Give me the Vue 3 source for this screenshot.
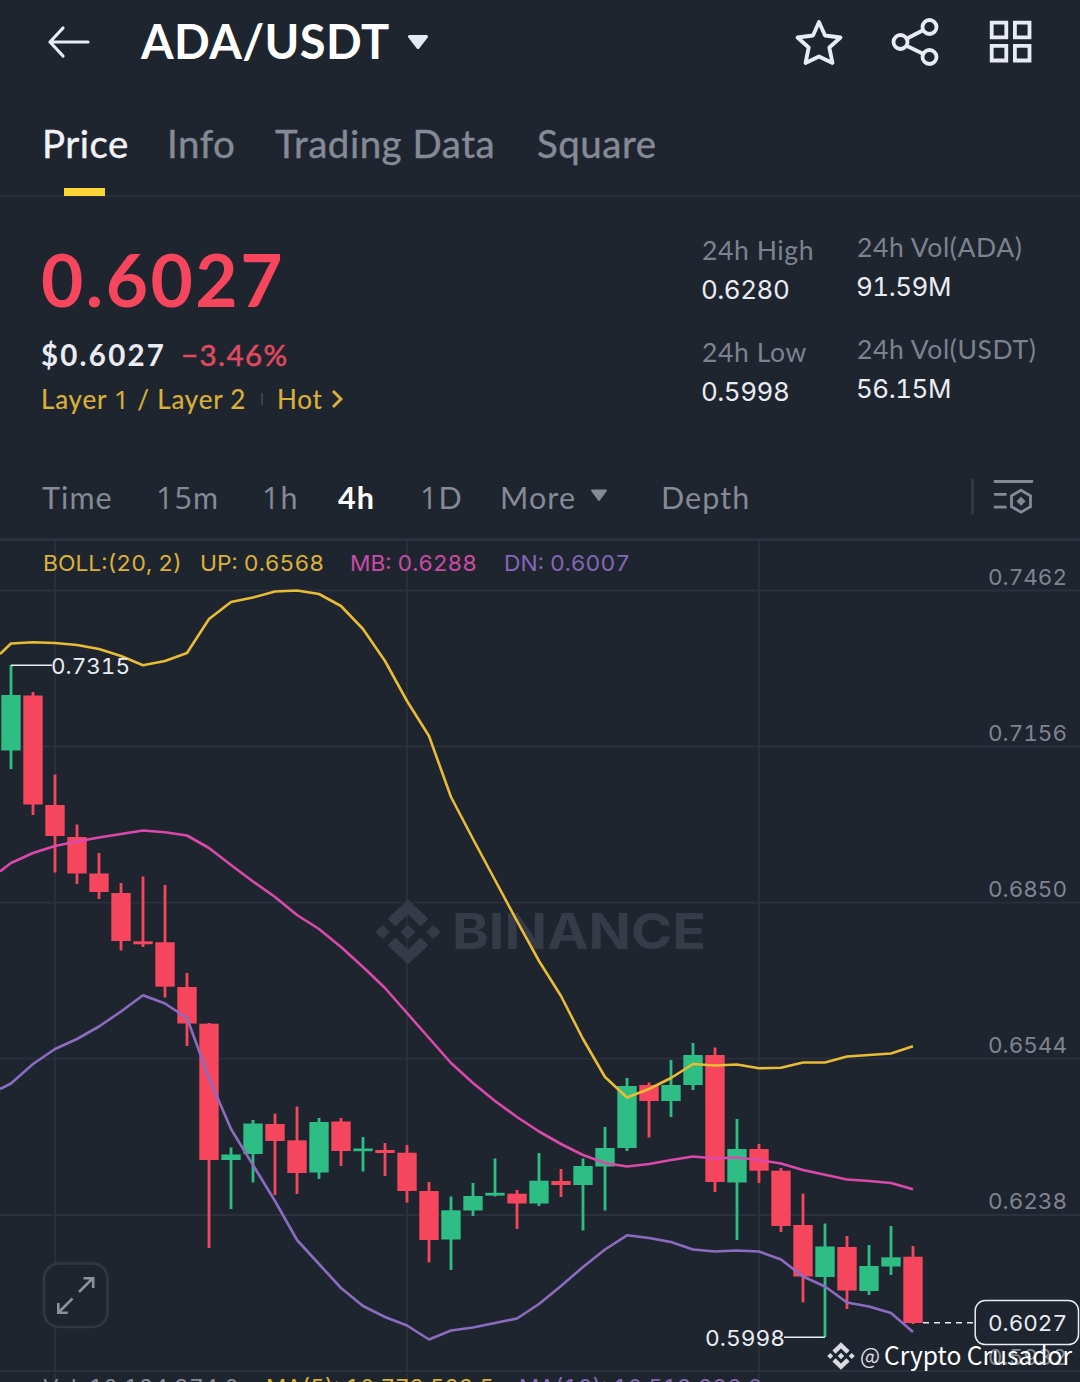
<template>
  <main class="screen">
    <header class="topbar">
      <svg class="back" viewBox="0 0 44 34" aria-label="Back">
        <path d="M16 3 3 17l13 14M3 17h38" />
      </svg>
      <h1>ADA/USDT</h1>
      <svg class="caret" viewBox="0 0 22 16">
        <path d="M2.500 2.500h17L11 13.500z" />
      </svg>
      <div class="actions">
        <svg class="icon" viewBox="0 0 52 52" aria-label="Favourite">
          <path d="M26 6 32 19.500 47.500 21.500 36.300 31.500 39.500 47 26 40.500 12.500 47 15.700 31.500 4.500 21.500 20 19.500z" />
        </svg>
        <svg class="icon" viewBox="0 0 52 52" aria-label="Share">
          <circle cx="11.500" cy="26" r="7" />
          <circle cx="40.500" cy="11" r="7" />
          <circle cx="40.500" cy="41" r="7" />
          <path d="M18 22.500 34 14.200M17 29.500 34.500 38" />
        </svg>
        <svg class="icon square" viewBox="0 0 52 52" aria-label="Layout">
          <path d="M6.700 6.700h14.600v14.600H6.700zM29.900 6.700h14.600v14.600H29.900zM6.700 29.900h14.600v14.600H6.700zM29.900 29.900h14.600v14.600H29.900z" />
        </svg>
      </div>
    </header>

    <nav class="tabs">
      <a v-for="tab in tabs" :key="tab" :class="{ active: tab === activeTab }" @click="activeTab = tab">
        <span>{{ tab }}</span>
      </a>
    </nav>

    <section class="summary">
      <div class="quote">
        <p class="last">0.6027</p>
        <p class="fiat"><b>$0.6027</b><span>−3.46%</span></p>
        <p class="tags">
          <span class="layers">Layer <i>1</i> / Layer 2</span>
          <span class="sep"></span>
          <span class="hot">Hot</span>
          <svg class="chevron" viewBox="0 0 12 20"><path d="m2 2 8 8-8 8" /></svg>
        </p>
      </div>
      <dl v-for="(column, c) in stats" :key="c" class="stats">
        <div v-for="stat in column" :key="stat.label">
          <dt>{{ stat.label }}</dt>
          <dd>{{ stat.value }}</dd>
        </div>
      </dl>
    </section>

    <nav class="intervals">
      <a>Time</a>
      <a><i>15</i>m</a>
      <a><i>1</i>h</a>
      <a class="active">4h</a>
      <a><i>1</i>D</a>
      <a>More <svg class="more" viewBox="0 0 18 13"><path d="M2 1.500h14L9 11z" /></svg></a>
      <a>Depth</a>
      <svg class="settings" viewBox="0 0 64 40" aria-label="Chart settings">
        <path class="rule" d="M2.500 4v33" />
        <path d="M25 5.500h37M25 18.300h10.500M25 31.200h10.500M51 14.200l9.500 5.500v11L51 36.200l-9.500-5.500v-11z" />
        <path class="dot" d="m51 20.700 4.500 4.500-4.500 4.500-4.500-4.500z" />
      </svg>
    </nav>

    <svg class="chart" viewBox="0 539 1080 843">
      <g class="grid">
        <path class="edge" d="M0 539.500H1080" />
        <path v-for="y in gridY" :key="y" :d="`M0 ${y}H1080`" />
        <path v-for="x in gridX" :key="x" :d="`M${x} 541V1382`" />
      </g>

      <g class="brand">
        <path transform="translate(408 932) scale(1.016)" :d="logo" />
        <text x="452" y="949" textLength="254" lengthAdjust="spacingAndGlyphs">BINANCE</text>
      </g>

      <g v-for="(c, i) in candles" :key="i" :class="c[4] ? 'up' : 'down'">
        <rect :x="9.6 + i * step" :y="c[2]" width="2.800" :height="c[3] - c[2]" />
        <rect :x="1.3 + i * step" :y="c[0]" width="19.400" :height="c[1] - c[0]" />
      </g>

      <polyline v-for="band in bands" :key="band.name" class="band" :class="band.name" :points="points(band)" />

      <g class="legend">
        <text
          v-for="item in legend"
          :key="item.text"
          :class="item.name"
          :x="item.x"
          y="571"
          :textLength="item.width"
          lengthAdjust="spacingAndGlyphs"
        >{{ item.text }}</text>
      </g>

      <g class="axis">
        <text
          v-for="(label, i) in axis"
          :key="label"
          x="988"
          :y="585 + i * 156"
          textLength="79"
          lengthAdjust="spacingAndGlyphs"
        >{{ label }}</text>
      </g>

      <g class="marks">
        <path d="M11 665.300H52M784 1337.300h41" />
        <text x="51" y="674" textLength="79" lengthAdjust="spacingAndGlyphs">0.7315</text>
        <text x="705" y="1346" textLength="80" lengthAdjust="spacingAndGlyphs">0.5998</text>
        <path class="dash" d="M923 1322.700h51" />
        <rect x="975.200" y="1300.600" width="103.300" height="44" rx="10" />
        <text x="988" y="1331" textLength="79" lengthAdjust="spacingAndGlyphs">0.6027</text>
      </g>

      <g class="expand">
        <rect x="44" y="1263.500" width="63.500" height="63.500" rx="15" />
        <path d="M79 1292l14-14M83.500 1278.300h9.700v9.700M72.500 1298.500l-14 14M58.300 1303v9.800h9.500" />
      </g>

      <g class="volume">
        <text x="43" y="1395" textLength="196" lengthAdjust="spacingAndGlyphs">Vol: 10,124,374.0</text>
        <text class="upper" x="266" y="1395" textLength="228" lengthAdjust="spacingAndGlyphs">MA(5): 10,772,523.5</text>
        <text class="lower" x="519" y="1395" textLength="243" lengthAdjust="spacingAndGlyphs">MA(10): 10,513,296.6</text>
      </g>

      <g class="author">
        <path transform="translate(841 1356) scale(.43)" :d="logo" />
        <text class="at" x="860" y="1364" textLength="20" lengthAdjust="spacingAndGlyphs">@</text>
        <text x="884" y="1365" textLength="188" lengthAdjust="spacingAndGlyphs">Crypto Crusador</text>
      </g>
    </svg>
  </main>
</template>

<script setup>
import { ref } from "vue";

const tabs = ["Price", "Info", "Trading Data", "Square"];
const activeTab = ref("Price");

const stats = [
  [
    { label: "24h High", value: "0.6280" },
    { label: "24h Low", value: "0.5998" },
  ],
  [
    { label: "24h Vol(ADA)", value: "91.59M" },
    { label: "24h Vol(USDT)", value: "56.15M" },
  ],
];

const legend = [
  { name: "upper", text: "BOLL:(20, 2)", x: 43, width: 139 },
  { name: "upper", text: "UP: 0.6568", x: 200, width: 124 },
  { name: "middle", text: "MB: 0.6288", x: 350, width: 127 },
  { name: "lower", text: "DN: 0.6007", x: 504, width: 126 },
];

const step = 22;
const gridY = [590.5, 746.5, 902.7, 1058.7, 1215, 1371];
const gridX = [55, 407, 759];
const axis = ["0.7462", "0.7156", "0.6850", "0.6544", "0.6238", "0.5932"];

// body top, body bottom, high, low, rising
const candles = [
  [695, 750.5, 665, 769, 1],
  [695.5, 804.5, 692, 815, 0],
  [805, 836, 774.5, 872.5, 0],
  [837, 873.5, 824.5, 884, 0],
  [873.5, 892, 853, 899, 0],
  [893, 941, 883, 950.5, 0],
  [941.3, 944.3, 876.5, 947, 0],
  [942.3, 986.7, 885, 997.5, 0],
  [987, 1023.5, 973, 1046, 0],
  [1023.7, 1160, 1023, 1248, 0],
  [1154.5, 1160, 1147.5, 1209, 1],
  [1123.5, 1154, 1120, 1182.5, 1],
  [1124, 1141, 1113.5, 1195, 0],
  [1140.3, 1173, 1106.5, 1194, 0],
  [1122, 1172.5, 1118, 1179, 1],
  [1121.5, 1151, 1118, 1166, 0],
  [1148.5, 1151.2, 1137, 1171.5, 1],
  [1150, 1153, 1143, 1176, 0],
  [1152.7, 1191, 1145, 1202.5, 0],
  [1191, 1240, 1182, 1262.5, 0],
  [1210.3, 1239.5, 1196.5, 1270, 1],
  [1196, 1210.5, 1183, 1216, 1],
  [1192.8, 1195.6, 1158.5, 1196.5, 1],
  [1193.7, 1203.5, 1190, 1229, 0],
  [1180.7, 1203.5, 1153, 1206, 1],
  [1181, 1185, 1169, 1197, 0],
  [1166, 1185, 1158.5, 1230.5, 1],
  [1148, 1166.5, 1127, 1210.5, 1],
  [1086, 1148, 1078, 1151, 1],
  [1085, 1101, 1082.5, 1137.5, 0],
  [1085, 1101, 1060, 1117, 1],
  [1055, 1085, 1043, 1090, 1],
  [1055, 1182, 1047.5, 1192, 0],
  [1149, 1182.5, 1119, 1240, 1],
  [1149, 1170.7, 1144, 1183, 0],
  [1170.7, 1226, 1168, 1232, 0],
  [1225, 1276.5, 1193.5, 1302.5, 0],
  [1246.5, 1277, 1223.5, 1337, 1],
  [1247, 1290.5, 1236, 1309, 0],
  [1266, 1291, 1245, 1295, 1],
  [1257.3, 1266.5, 1226, 1275, 1],
  [1256.7, 1323, 1246, 1324, 0],
];

// first value sits on the left edge, the rest on the candle centres
const bands = [
  {
    name: "upper",
    values: [
      654, 643.5, 642.3, 643, 645, 649, 656, 665.3, 661, 653, 619, 602, 597.5, 591.5, 590.5, 594, 606,
      629, 661, 701, 736, 797, 839, 880, 921, 961, 996, 1039, 1077, 1097.5, 1089, 1078, 1064, 1065.5,
      1064.5, 1068.3, 1067.7, 1062.5, 1062.5, 1056.5, 1055, 1053.5, 1046.3,
    ],
  },
  {
    name: "middle",
    values: [
      871.5, 863, 853, 846, 841.5, 837.5, 834, 830.5, 832.2, 835.5, 848, 865, 881.5, 897, 915, 929,
      947, 967, 988, 1013, 1038, 1063, 1083, 1101, 1117, 1131.5, 1144, 1155, 1163, 1166.5, 1164, 1160,
      1156.5, 1158.5, 1157.5, 1160, 1163.5, 1170, 1174.7, 1179.5, 1181, 1183, 1189.3,
    ],
  },
  {
    name: "lower",
    values: [
      1089, 1083.5, 1064, 1049, 1039, 1026.5, 1011.5, 995.3, 1003.5, 1018, 1078, 1129, 1165, 1201,
      1240, 1264, 1288, 1306, 1317, 1325.5, 1339.5, 1330.5, 1327.5, 1323, 1318.5, 1304, 1286, 1267,
      1249.5, 1235.3, 1238, 1242, 1249.5, 1251.5, 1250.5, 1251.5, 1259.5, 1276.5, 1286.5, 1302.5, 1306.5,
      1313, 1332,
    ],
  },
];

const logo =
  "M0-32 20-13 12.500-5.500 0-17.500-12.500-5.500-20-13zM0 32 20 13 12.500 5.500 0 17.500-12.500 5.500-20 13zM0-7.500 7.500 0 0 7.500-7.500 0zM-25-7-18 0-25 7-32 0zM25-7 32 0 25 7 18 0z";

function points(band) {
  return band.values.map((y, i) => `${i ? 11 + (i - 1) * step : 0},${y}`).join(" ");
}
</script>

<style>
body {
  margin: 0;
  background: #1f252f;
}
</style>

<style scoped>
.screen {
  width: 1080px;
  height: 1382px;
  overflow: hidden;
  background: #1f252f;
  color: #eaecf3;
  font-family: Lato, "Open Sans", sans-serif;
}

h1,
p,
dl,
dd {
  margin: 0;
}

svg {
  display: block;
  flex: none;
}

i {
  font-family: "Open Sans", sans-serif;
  font-style: normal;
}

.topbar {
  display: flex;
  align-items: center;
  box-sizing: border-box;
  height: 84px;
  padding: 0 44px 0 47px;
}

.back {
  width: 44px;
  height: 34px;
  fill: none;
  stroke: #eaecf3;
  stroke-width: 3.200;
  stroke-linecap: round;
  stroke-linejoin: round;
}

h1 {
  width: 248px;
  margin: -3px 0 0 50px;
  color: #fff;
  font-size: 47px;
  line-height: 80px;
  letter-spacing: 0.4px;
  white-space: nowrap;
}

.caret {
  width: 22px;
  height: 16px;
  margin-left: 18px;
}

.caret path {
  fill: #e6e9f2;
  stroke: #e6e9f2;
  stroke-width: 3;
  stroke-linejoin: round;
}

.actions {
  display: flex;
  gap: 44px;
  margin-left: auto;
}

.icon {
  width: 52px;
  height: 52px;
  fill: none;
  stroke: #e8ebf4;
  stroke-width: 3.800;
  stroke-linejoin: round;
}

.icon.square {
  margin-right: -1px;
  stroke-linejoin: miter;
}

.tabs {
  display: grid;
  grid-template-columns: 125px 108px 262px 1fr;
  box-sizing: border-box;
  height: 113px;
  padding-left: 42px;
  border-bottom: 2px solid #292f39;
  color: #858a96;
  font-size: 38.500px;
  line-height: 60px;
  letter-spacing: 0.5px;
  -webkit-text-stroke: 0.4px;
}

.tabs span {
  display: block;
  width: max-content;
  height: 83px;
  padding-top: 29px;
}

.tabs .active {
  color: #f0f2f8;
}

.tabs .active span::after {
  content: "";
  display: block;
  width: 41px;
  height: 8px;
  margin: 15px 0 0 22px;
  background: #fbd535;
}

.summary {
  display: flex;
  height: 261px;
}

.quote {
  width: 661px;
  padding: 42px 0 0 41px;
}

.last {
  color: #f6465d;
  font-size: 73px;
  font-weight: 700;
  line-height: 80px;
  letter-spacing: 2.500px;
}

.fiat {
  display: flex;
  gap: 15px;
  margin-top: 16px;
  font-size: 29.500px;
  line-height: 40px;
  letter-spacing: 2.200px;
}

.fiat span {
  color: #e04a60;
  letter-spacing: 1.400px;
  -webkit-text-stroke: 0.5px;
}

.tags {
  display: flex;
  align-items: center;
  margin-top: 4px;
  color: #d9b13a;
  font-size: 26px;
  line-height: 40px;
  letter-spacing: 0.8px;
  -webkit-text-stroke: 0.2px;
}

.layers {
  width: 220px;
  white-space: nowrap;
}

.sep {
  width: 2px;
  height: 12px;
  margin-right: 14px;
  background: #39404c;
}

.hot {
  width: 54px;
}

.chevron {
  width: 12px;
  height: 20px;
  fill: none;
  stroke: #d9b13a;
  stroke-width: 3;
}

.stats {
  display: flex;
  flex-direction: column;
  gap: 22px;
  width: 155px;
  padding-top: 33px;
  line-height: 40px;
  white-space: nowrap;
}

.stats + .stats {
  width: 210px;
  padding-top: 30px;
}

.stats dt {
  color: #7d828e;
  font-size: 26.500px;
  letter-spacing: 0.6px;
}

.stats dd {
  margin: 0 0 0 -1px;
  font-family: Inter, sans-serif;
  font-size: 26px;
  font-variant-numeric: tabular-nums;
  letter-spacing: -0.5px;
}

.intervals {
  display: grid;
  grid-template-columns: 114px 106px 76px 82px 80px 161px 309px 64px;
  align-items: center;
  height: 81px;
  padding-left: 42px;
  color: #858a96;
  font-size: 30.500px;
  letter-spacing: 1.100px;
}

.intervals a {
  display: flex;
  align-items: center;
  margin-top: -3px;
  line-height: 60px;
}

.intervals .active {
  margin-top: -4px;
  color: #fff;
  font-weight: 700;
}

.more {
  width: 18px;
  height: 13px;
  margin: -3px 0 0 14px;
  fill: #858a96;
  stroke: #858a96;
  stroke-width: 2;
  stroke-linejoin: round;
}

.settings {
  width: 64px;
  height: 40px;
  margin-top: -5px;
  fill: none;
  stroke: #858a96;
  stroke-width: 2.800;
  stroke-linecap: round;
}

.settings .rule {
  stroke: #343a45;
}

.settings .dot {
  fill: #858a96;
  stroke: none;
}

.chart {
  width: 1080px;
  height: 843px;
  overflow: visible;
  font-family: Inter, sans-serif;
  font-size: 22px;
  font-variant-numeric: tabular-nums;
}

.grid path {
  stroke: #2b313c;
  stroke-width: 1.800;
}

.grid .edge {
  stroke-width: 3;
}

.brand {
  fill: #363c47;
  font-size: 50px;
  font-weight: 700;
}

.up {
  fill: #2ebd85;
}

.down {
  fill: #f6465d;
}

.band {
  fill: none;
  stroke-width: 2.600;
  stroke-linejoin: round;
}

.band.upper {
  stroke: #e8bc35;
}

.band.middle {
  stroke: #dc49ac;
}

.band.lower {
  stroke: #8b6cc0;
}

text.upper {
  fill: #dbb13a;
}

text.middle {
  fill: #c94ba6;
}

text.lower {
  fill: #8467b6;
}

.axis {
  fill: #7f8490;
}

.marks text {
  fill: #eaecf3;
}

.marks path,
.marks rect {
  fill: none;
  stroke: #eaecf3;
  stroke-width: 1.500;
}

.marks rect {
  fill: #1f252f;
}

.marks .dash {
  stroke-dasharray: 6 5;
}

.expand {
  fill: none;
  stroke: #8a909c;
  stroke-width: 2.600;
}

.expand rect {
  fill: #1f252f;
  stroke: #323843;
}

.volume {
  fill: #858a96;
}

.author {
  fill: #fff;
  font-family: "Noto Sans CJK SC", sans-serif;
  font-size: 25px;
}

.author path,
.author .at {
  fill: #d9dbe0;
}

.author .at {
  font-size: 22px;
}
</style>
